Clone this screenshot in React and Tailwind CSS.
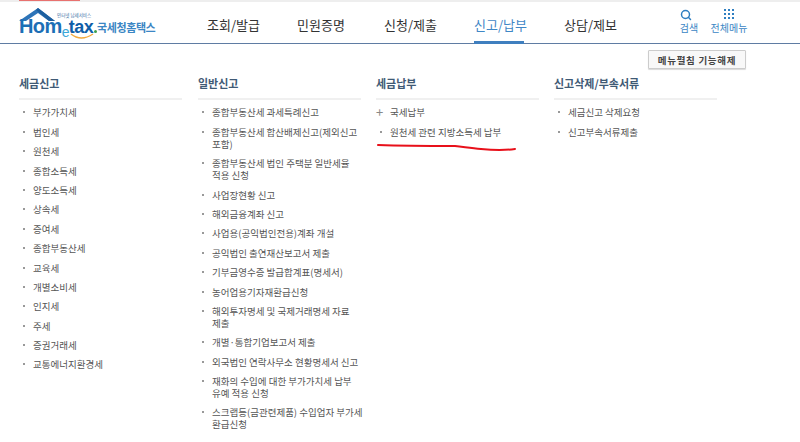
import React from "react";
import { Search } from "lucide-react";

const NAV = [
  { label: "조회/발급", width: "w-[90px]" },
  { label: "민원증명", width: "w-[87px]" },
  { label: "신청/제출", width: "w-[90px]" },
  { label: "신고/납부", width: "w-[90px]", active: true },
  { label: "상담/제보", width: "w-[90px]" }
];

const COLUMNS = [
  {
    title: "세금신고",
    width: "w-[179px]",
    items: [
      "부가가치세", "법인세", "원천세", "종합소득세", "양도소득세", "상속세", "증여세",
      "종합부동산세", "교육세", "개별소비세", "인지세", "주세", "증권거래세", "교통에너지환경세"
    ]
  },
  {
    title: "일반신고",
    width: "w-[178px]",
    items: [
      "종합부동산세 과세특례신고",
      "종합부동산세 합산배제신고(제외신고 포함)",
      "종합부동산세 법인 주택분 일반세율 적용 신청",
      "사업장현황 신고",
      "해외금융계좌 신고",
      "사업용(공익법인전용)계좌 개설",
      "공익법인 출연재산보고서 제출",
      "기부금영수증 발급합계표(명세서)",
      "농어업용기자재환급신청",
      "해외투자명세 및 국제거래명세 자료 제출",
      "개별·통합기업보고서 제출",
      "외국법인 연락사무소 현황명세서 신고",
      "재화의 수입에 대한 부가가치세 납부\u200b유예 적용 신청",
      "스크랩등(금관련제품) 수입업자 부가세 환급신청"
    ]
  },
  {
    title: "세금납부",
    width: "w-[178px]",
    items: ["국세납부", "원천세 관련 지방소득세 납부"],
    plusFirst: true
  },
  {
    title: "신고삭제/부속서류",
    width: "w-[163px]",
    items: ["세금신고 삭제요청", "신고부속서류제출"]
  }
];

function Logo() {
  return (
    <div className="relative h-[41px] w-[160px]">
      <svg className="absolute left-[18px] top-[5px]" width="38" height="15" viewBox="0 0 38 15">
        <path d="M1 14 L20 1 L37 14 L31 14 L20 6 L8 14 Z" fill="#2d74b8" />
        <path d="M20 1 L37 14 L31 14 L18 3 Z" fill="#1d5f9f" />
      </svg>
      <span className="absolute left-[57px] top-[11px] whitespace-nowrap text-[4.5px] leading-[5px] text-[#3b6ea5]">인터넷 납세서비스</span>
      <div className="absolute left-[19px] top-[16px] flex items-baseline whitespace-nowrap font-['Liberation_Sans',sans-serif] text-[20px] font-bold leading-[16px] tracking-[-0.6px] text-[#1c6fb6]">
        <span>Hom</span>
        <span className="relative top-[4px] text-[14px] font-normal text-[#3aa7d8]">e</span>
        <span className="text-[18px] text-[#0f5ea8]">tax</span>
        <span className="ml-[1px] h-[3px] w-[3px] rounded-full bg-[#3f9e4b]"></span>
      </div>
      <svg className="absolute left-[70px] top-[31px]" width="24" height="7" viewBox="0 0 24 7">
        <path d="M1 1 Q11 9 23 1" fill="none" stroke="#f3a93c" strokeWidth="1.5" />
      </svg>
      <span className="absolute left-[97px] top-[18px] whitespace-nowrap text-[11px] font-bold leading-[15px] tracking-[-0.4px] text-[#3b86c4]">국세청홈택스</span>
    </div>
  );
}

function GridDots() {
  return (
    <div className="grid h-[10px] w-[10px] grid-cols-3 gap-[1.5px]">
      {Array.from({ length: 9 }).map((_, i) => (
        <span key={i} className="bg-[#2f7fc1]"></span>
      ))}
    </div>
  );
}

function MenuColumn({ column }) {
  return (
    <div className={column.width}>
      <div className="w-[163px] border-b-2 border-[#f0f0f0] pb-[7px]">
        <h3 className="text-[11px] leading-[16px] font-bold text-[#3f5a75]">{column.title}</h3>
      </div>
      <ul className="mt-[3px] w-[166px]">
        {column.items.map((item, idx) => (
          <li key={item} className="flex pt-[3.4px] pb-[4px] pl-[4px] text-[9.5px] leading-[12px] text-[#555]">
            {column.plusFirst && idx === 0 ? (
              <span className="-ml-[4px] w-[14px] shrink-0 text-[13px] leading-[12px] text-[#888]">+</span>
            ) : (
              <span className="flex h-[12px] w-[10px] shrink-0 items-center">
                <span className="h-[2px] w-[2px] bg-[#999]"></span>
              </span>
            )}
            <span className="break-keep">{item}</span>
          </li>
        ))}
      </ul>
    </div>
  );
}

export default function App() {
  return (
    <div className="relative h-[442px] w-[800px] overflow-hidden bg-white font-['Noto_Sans_CJK_KR','Noto_Sans',sans-serif]">
      {/* 상단 바 */}
      <div className="h-[2px] bg-[#eeeeee]">
        <div className="ml-[19px] h-[1px] w-[61px] bg-[#e8716f]"></div>
      </div>

      {/* 헤더 */}
      <header className="flex h-[42px] border-b border-[#5f7ca3]">
        <Logo />
        <nav className="ml-[47px] flex">
          {NAV.map((n) => (
            <div key={n.label} className={`${n.width} pt-[14px] text-[13px] leading-[18px]`}>
              <span
                className={`block h-[28px] w-[50px] whitespace-nowrap ${
                  n.active ? "border-b-[3px] border-[#3f7fbf] text-[#3f87c6]" : "text-[#333]"
                }`}
              >
                {n.label}
              </span>
            </div>
          ))}
        </nav>
        <div className="ml-[17px] flex w-[36px] flex-col items-center pt-[7px] text-[10px] leading-[12px] text-[#3b86c4]">
          <Search className="mr-[6px] mb-[1px] h-[12px] w-[12px]" strokeWidth={3} color="#2f7fc1" />
          검색
        </div>
        <div className="flex w-[44px] flex-col items-center pt-[7px] text-[10px] leading-[12px] text-[#3b86c4]">
          <div className="mb-[3px]">
            <GridDots />
          </div>
          전체메뉴
        </div>
      </header>

      <div className="flex justify-end pr-[54px] pt-[6px]">
        <button className="h-[19px] w-[98px] rounded-[1px] border border-[#ccc] bg-[#f8f8f8] text-[9.5px] leading-[16px] font-bold tracking-[0.7px] whitespace-nowrap text-[#444] shadow-[0_1px_1px_rgba(0,0,0,0.15)]">
          메뉴펼침 기능해제
        </button>
      </div>

      {/* 메뉴 */}
      <div className="mt-[6px] flex pl-[19px]">
        {COLUMNS.map((c) => (
          <MenuColumn key={c.title} column={c} />
        ))}
      </div>

      {/* 빨간 밑줄 */}
      <svg className="absolute left-[376px] top-[140px]" width="144" height="14" viewBox="0 0 144 14">
        <path
          d="M2 5 C30 6 60 6 79 6 C88 7 95 8 105 9 C115 10 125 11 139 9"
          fill="none"
          stroke="#e8101a"
          strokeWidth="2"
          strokeLinecap="round"
        />
      </svg>
    </div>
  );
}
